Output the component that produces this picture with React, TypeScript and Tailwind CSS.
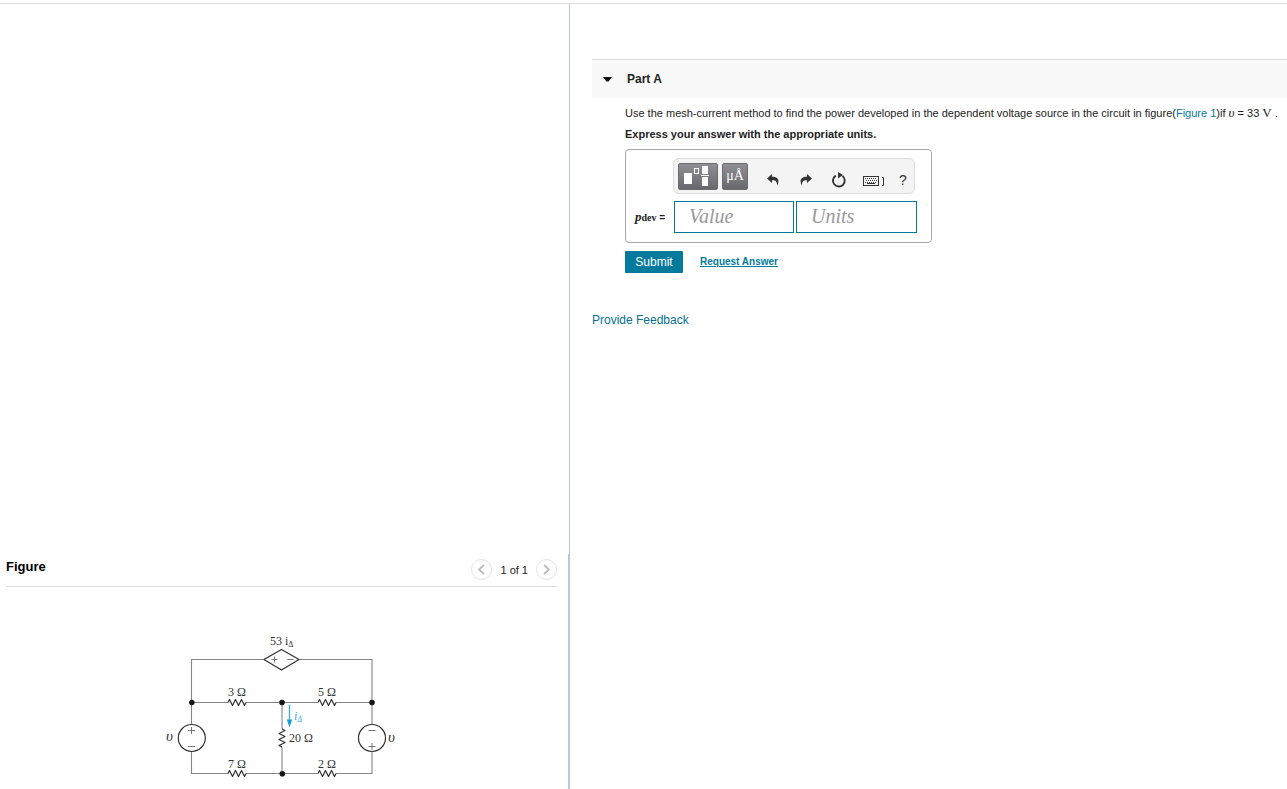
import type { ReactNode } from "react";

const sans = "font-['Liberation_Sans',Arial,sans-serif]";
const serif = "font-['Liberation_Serif','Times_New_Roman',serif]";

function ToolButton({ label, children }: { label: string; children: ReactNode }) {
  return (
    <button type="button" aria-label={label} className="flex h-6 w-[33px] items-center justify-center text-[#333]">
      {children}
    </button>
  );
}

function PagerButton({ label, points }: { label: string; points: string }) {
  return (
    <button
      type="button"
      aria-label={label}
      className="flex size-[21px] items-center justify-center rounded-full border border-[#e2e2e2] bg-white"
    >
      <svg width="9" height="11" viewBox="0 0 9 11" fill="none" stroke="#bcbcbc" strokeWidth="1.8">
        <polyline points={points} />
      </svg>
    </button>
  );
}

function Circuit() {
  const zig = "l1.5 -3 l3 6 l3 -6 l3 6 l3 -6 l3 6 l1.5 -3";
  return (
    <svg
      width="242"
      height="162"
      viewBox="161 627 242 162"
      fill="none"
      role="img"
      aria-label="Circuit diagram"
      className={serif}
    >
      <g stroke="#858585" strokeWidth="1.1">
        <path d="M264 659.5H191.500V724M191.500 752V773.500H228M246 773.500H318M336 773.500H372V752M372 724V659.500H299" />
        <path d="M191.500 702.500H228M246 702.500H318M336 702.500H372M282 702V729M282 747V774" />
      </g>
      <g stroke="#303030" strokeWidth="1.2" strokeLinejoin="round">
        <path d={"M228 702.500" + zig} />
        <path d={"M318 702.500" + zig} />
        <path d={"M228 773.500" + zig} />
        <path d={"M318 773.500" + zig} />
        <path d="M282 729l3 1.500l-6 3l6 3l-6 3l6 3l-6 3l3 1.500" />
        <path d="M264 659.500L281.500 649.500L299 659.500L281.500 670Z" fill="#fff" />
        <circle cx="191.800" cy="738" r="13.500" fill="#fff" />
        <circle cx="372" cy="738" r="13.500" fill="#fff" />
      </g>
      <g stroke="#777" strokeWidth="1">
        <path d="M271.500 659.500h6M274.500 656.500v6M287.500 659.500h6" />
        <path d="M188 730.500h7M191.500 727v7M188 746.500h7" />
        <path d="M368.500 730.500h7M368.500 746.500h7M372 743v7" />
      </g>
      <g fill="#151515">
        <circle cx="191.800" cy="702.500" r="2.800" />
        <circle cx="282" cy="702.500" r="2.800" />
        <circle cx="372" cy="702.500" r="2.800" />
        <circle cx="282.300" cy="773.800" r="2.800" />
      </g>
      <path d="M289.500 705v17" stroke="#35afe0" strokeWidth="1.300" />
      <path d="M286.800 719.500h5.400l-2.700 8z" fill="#159ed6" />
      <g fill="#333" fontSize="12">
        <text x="270" y="645">53 i<tspan fontSize="8" dy="2">Δ</tspan></text>
        <text x="228" y="696">3 Ω</text>
        <text x="318" y="696">5 Ω</text>
        <text x="228" y="768">7 Ω</text>
        <text x="318" y="768">2 Ω</text>
        <text x="289" y="742">20 Ω</text>
        <text x="294" y="720" fill="#35afe0" fontStyle="italic">
          i<tspan fontSize="8" dy="2">Δ</tspan>
        </text>
        <text x="166" y="741" fontSize="15" fontStyle="italic">υ</text>
        <text x="388" y="742" fontSize="15" fontStyle="italic">υ</text>
      </g>
    </svg>
  );
}

function FigurePanel() {
  return (
    <section className="border-r-2 border-[#b6c8d9] pl-1.5">
      <header className="mr-[11px] flex h-[33px] items-center justify-between border-b border-[#dcdcdc]">
        <h2 className="pb-1.5 text-[13px] leading-4 font-bold text-black">Figure</h2>
        <div className="flex items-center gap-2 pb-0.5 text-[11px] leading-4 text-[#222]">
          <PagerButton label="Previous figure" points="7,1 2,5.500 7,10" />
          <span className="pt-0.5">1 of 1</span>
          <PagerButton label="Next figure" points="2,1 7,5.500 2,10" />
        </div>
      </header>
      <div className="mr-[11px] flex justify-center pt-10">
        <Circuit />
      </div>
    </section>
  );
}

function AnswerBox() {
  const field =
    "h-8 border border-[#047a9c] bg-white pl-[14px] pb-0.5 font-['Liberation_Serif','Times_New_Roman',serif] text-[20px] text-[#333] italic placeholder:text-[#999] outline-none";
  return (
    <div className="w-[307px] rounded border border-[#a6a6a6] pt-2 pb-[9px] pl-[9px]">
      <div className="ml-[38px] flex h-9 w-[242px] items-center rounded-md border border-[#dcdcdc] bg-[#f4f4f4] pl-1">
        <button
          type="button"
          aria-label="Templates"
          className="flex h-[27px] w-10 shrink-0 items-center justify-center rounded-xs border border-[#6c6c70] bg-linear-to-b from-[#8f8f94] to-[#68686d]"
        >
          <svg width="28" height="21" viewBox="0 0 28 21" fill="#fff">
            <rect x="0" y="7" width="8" height="11" />
            <rect x="10.500" y="2.500" width="4" height="5" fill="none" stroke="#fff" />
            <rect x="18" y="0" width="6" height="8" />
            <rect x="17" y="9" width="8" height="1" />
            <rect x="18" y="11" width="6" height="9" />
          </svg>
        </button>
        <button
          type="button"
          aria-label="Symbols"
          className={`ml-1 flex h-[27px] w-[26px] shrink-0 items-center justify-center rounded-xs border border-[#6c6c70] bg-linear-to-b from-[#8f8f94] to-[#68686d] text-[14px] leading-5 text-white ${serif}`}
        >
          μÅ
        </button>
        <div className="ml-2 flex shrink-0 items-center pt-2">
          <ToolButton label="Undo">
            <svg width="12" height="12" viewBox="0 0 12 12" fill="currentColor">
              <path d="M5 0L0 4.500L5 9V6.200C8.200 6 10 7 10.200 11.500C12.800 6.500 11.500 2.700 5 2.700Z" />
            </svg>
          </ToolButton>
          <ToolButton label="Redo">
            <svg width="12" height="12" viewBox="0 0 12 12" fill="currentColor">
              <path d="M7 0L12 4.500L7 9V6.200C3.800 6 2 7 1.800 11.500C-.8 6.500 .5 2.700 7 2.700Z" />
            </svg>
          </ToolButton>
          <ToolButton label="Reset">
            <svg width="16" height="16" viewBox="0 0 16 16" fill="none">
              <path d="M4.800 3.600A5.900 5.900 0 1 0 11.500 4" stroke="currentColor" strokeWidth="1.900" />
              <path d="M7 0L12 3L7 6.500Z" fill="currentColor" />
            </svg>
          </ToolButton>
          <button type="button" aria-label="Keyboard shortcuts" className="ml-2 flex h-6 w-6 items-center pt-0.5 text-[#333]">
            <svg width="23" height="13" viewBox="0 0 23 13" fill="none">
              <rect x=".5" y="1.500" width="15" height="9" stroke="currentColor" />
              <path d="M2 3.500h12M3 5.500h11M2 7.500h12" stroke="currentColor" strokeDasharray="1 1" />
              <path d="M4 8.500h8" stroke="currentColor" />
              <path d="M19 2.500h1.500v8h-1.500" stroke="currentColor" />
            </svg>
          </button>
          <button type="button" aria-label="Help" className="w-8 text-[14px] leading-5 text-[#333]">
            ?
          </button>
        </div>
      </div>
      <div className="mt-[7px] flex items-center">
        <div className="w-[39px] text-[10px] font-bold text-[#222]">
          <span className={`text-[13px] italic ${serif}`}>p</span>
          <span className={`text-[10px] ${serif}`}>dev</span> =
        </div>
        <div className="flex gap-0.5">
          <input aria-label="Value" placeholder="Value" className={`w-[120px] ${field}`} />
          <input aria-label="Units" placeholder="Units" className={`w-[121px] ${field}`} />
        </div>
      </div>
    </div>
  );
}

function QuestionPanel() {
  return (
    <section className="pt-[55px] pl-[22px]">
      <h2 className="h-[39px] border-t border-[#dcdcdc] bg-[#f8f8f8] text-[12px] font-bold text-[#222]">
        <button type="button" className="flex h-full w-full items-center gap-[15px] pl-[11px]">
          <svg width="9" height="5" viewBox="0 0 9 5" fill="#111">
            <path d="M0 0h9L5.500 4.500h-2z" />
          </svg>
          Part A
        </button>
      </h2>
      <div className="pl-[33px] text-[11px] leading-4 text-[#222]">
        <p className="pt-[7px]">
          Use the mesh-current method to find the power developed in the dependent voltage source in the circuit in
          figure(
          <a href="#figure" className="text-[#047a9c]">
            Figure 1
          </a>
          )if <span className={`text-[13px] italic ${serif}`}>υ</span> = 33{" "}
          <span className={`text-[13px] ${serif}`}>V</span> .
        </p>
        <p className="pt-[5px] pb-[7px] font-bold">Express your answer with the appropriate units.</p>
        <AnswerBox />
        <div className="mt-2 flex items-center gap-[17px]">
          <button type="button" className="h-[22px] w-[58px] rounded-[1px] bg-[#047a9c] text-[12px] text-white">
            Submit
          </button>
          <a href="#answer" className="text-[10px] font-bold text-[#047a9c] underline">
            Request Answer
          </a>
        </div>
      </div>
      <a href="#feedback" className="mt-[39px] inline-block text-[12px] leading-4 text-[#05708f]">
        Provide Feedback
      </a>
    </section>
  );
}

export default function App() {
  return (
    <div className={`flex min-h-screen flex-col bg-white pt-[3px] ${sans}`}>
      <main className="grid flex-1 grid-cols-[570fr_717fr] border-t border-[#dcdcdc]">
        <div className="flex flex-col">
          <div className="flex-1 border-r border-[#b9c6d2]" />
          <FigurePanel />
        </div>
        <QuestionPanel />
      </main>
    </div>
  );
}
